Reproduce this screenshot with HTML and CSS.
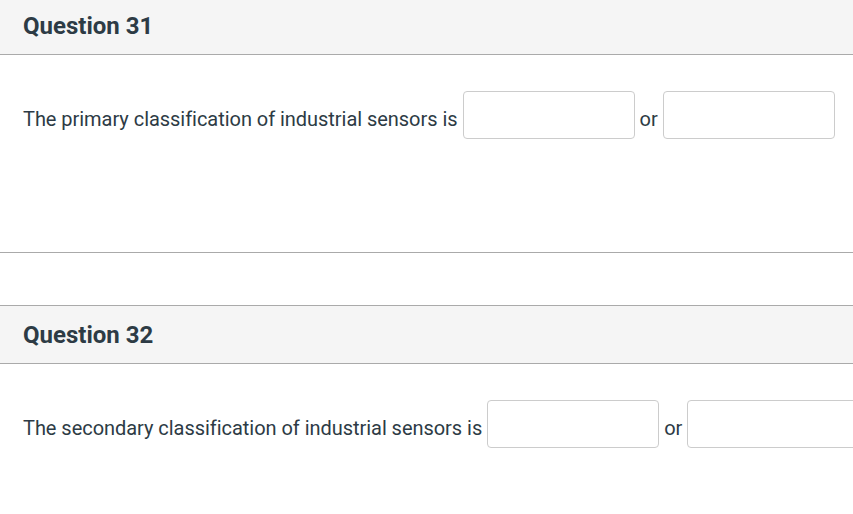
FILE: index.html
```html
<!DOCTYPE html>
<html lang="en">
<head>
<meta charset="utf-8">
<title>Quiz</title>
<link rel="stylesheet" href="styles.css">
</head>
<body>
<div class="quiz">
  <section class="question first">
    <div class="q-header"><h2 class="q-title">Question 31</h2></div>
    <div class="q-body">
      <div class="q-row">
        <span class="q-text">The primary classification of industrial sensors is</span>
        <input class="blank" type="text" aria-label="Answer 1">
        <span class="q-text">or</span>
        <input class="blank" type="text" aria-label="Answer 2">
      </div>
    </div>
  </section>
  <section class="question">
    <div class="q-header"><h2 class="q-title">Question 32</h2></div>
    <div class="q-body">
      <div class="q-row">
        <span class="q-text">The secondary classification of industrial sensors is</span>
        <input class="blank" type="text" aria-label="Answer 1">
        <span class="q-text">or</span>
        <input class="blank" type="text" aria-label="Answer 2">
      </div>
    </div>
  </section>
</div>
</body>
</html>
```

FILE: styles.css
```css
html, body {
  margin: 0;
  padding: 0;
  background: #ffffff;
  overflow: hidden;
}
body {
  font-family: Roboto, "Liberation Sans", sans-serif;
  color: #2d3b45;
}
.quiz {
  display: flex;
  flex-direction: column;
  gap: 52px;
  margin-top: -4px;
}
.question {
  border-top: 1px solid #aaaaaa;
  border-bottom: 1px solid #aaaaaa;
}
.q-header {
  background: #f5f5f5;
  border-bottom: 1px solid #aaaaaa;
  height: 57px;
  padding: 0 23px;
  display: flex;
  align-items: center;
}
.q-title {
  margin: 0;
  font-size: 24px;
  font-weight: 700;
  padding-top: 1px;
}
.q-body {
  height: 161px;
  padding: 36px 23px 0;
}
.q-row {
  display: flex;
  align-items: center;
  gap: 5px;
}
.q-text {
  font-size: 20px;
  letter-spacing: -0.04px;
  padding-top: 8px;
  white-space: nowrap;
}
.blank {
  flex: none;
  width: 172px;
  height: 48px;
  box-sizing: border-box;
  border: 1px solid #cccccc;
  border-radius: 4px;
  background: #ffffff;
  margin: 0;
  padding: 0 8px;
  font: inherit;
}
```
